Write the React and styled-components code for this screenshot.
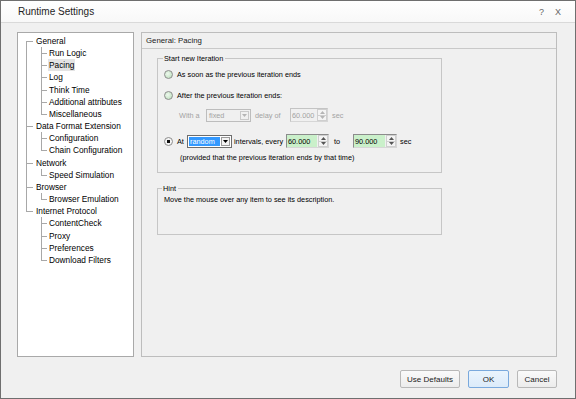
import React from "react";
import styled, { createGlobalStyle } from "styled-components";

const GlobalStyle = createGlobalStyle`
  html, body {
    margin: 0;
    padding: 0;
    background: #f0f0f0;
  }
  body {
    font-family: "Liberation Sans", Arial, sans-serif;
    color: #000;
  }
`;

const Window = styled.div`
  width: 576px;
  height: 399px;
  box-sizing: border-box;
  border: 1px solid #6f6f6f;
  background: #f0f0f0;
  display: flex;
  flex-direction: column;
`;

const TitleBar = styled.div`
  height: 22px;
  box-sizing: border-box;
  flex-shrink: 0;
  display: flex;
  align-items: center;
  padding: 0 14px 0 17px;
  background: linear-gradient(#ffffff, #f8f8f8);
  border-bottom: 1px solid #d9d9d9;
`;

const TitleText = styled.div`
  flex: 1;
  font-size: 10px;
  color: #1e1e1e;
`;

const TitleIcons = styled.div`
  display: flex;
  gap: 11px;
  font-size: 9px;
  color: #666;
`;

const Body = styled.div`
  flex: 1;
  display: flex;
  gap: 7px;
  padding: 9px 18px 0 16px;
  min-height: 0;
`;

const TreePanel = styled.div`
  width: 117px;
  flex-shrink: 0;
  box-sizing: border-box;
  background: #fff;
  border: 1px solid #a9a9a9;
  padding: 2px 0 0 8px;
  font-size: 8.3px;
`;

const Node = styled.div`
  position: relative;
  padding-left: ${p => (p.$child ? 7 : 9)}px;

  &::before {
    content: "";
    position: absolute;
    left: 0;
    top: 6px;
    width: ${p => (p.$child ? 6 : 7)}px;
    border-top: 1px solid #a8a8a8;
  }

  &::after {
    content: "";
    position: absolute;
    left: 0;
    top: ${p => (p.$first ? 6 : 0)}px;
    ${p => (p.$last ? "height: 7px;" : "bottom: 0;")}
    border-left: 1px solid #a8a8a8;
  }
`;

const NodeLabel = styled.div`
  height: 12.17px;
  line-height: 12.17px;
  white-space: nowrap;
`;

const LabelText = styled.span`
  padding: 1px 1px;
  background: ${p => (p.$selected ? "#e3e3e3" : "transparent")};
`;

const Children = styled.div`
  margin-left: 6px;
`;

const ContentPanel = styled.div`
  flex: 1;
  box-sizing: border-box;
  border: 1px solid #bdbdbd;
  display: flex;
  flex-direction: column;
`;

const PanelHeader = styled.div`
  height: 16px;
  box-sizing: border-box;
  border-bottom: 1px solid #c9c9c9;
  padding-left: 4px;
  display: flex;
  align-items: center;
  font-size: 7.8px;
  color: #1a1a1a;
`;

const PanelBody = styled.div`
  padding: 9px 0 0 15px;
  display: flex;
  flex-direction: column;
  gap: 15px;
`;

const GroupBox = styled.div`
  position: relative;
  width: 285px;
  box-sizing: border-box;
  border: 1px solid #c6c6c6;
  min-height: ${p => p.$h}px;
  padding: ${p => p.$pad};
  font-size: 7.3px;
`;

const Legend = styled.span`
  position: absolute;
  top: -5px;
  left: ${p => p.$left}px;
  padding: 0 2px 0 1px;
  background: #f0f0f0;
  line-height: 9px;
  font-size: 7.3px;
`;

const Row = styled.div`
  display: flex;
  align-items: center;
  height: 14px;
  margin-top: ${p => p.$mt || 0}px;
  padding-left: ${p => p.$indent || 0}px;
  white-space: nowrap;
`;

const Radio = styled.span`
  width: 9px;
  height: 9px;
  box-sizing: border-box;
  border-radius: 50%;
  border: 1px solid #8d8d8d;
  background: ${p =>
    p.$checked
      ? "radial-gradient(circle, #111 0 1.6px, #f4f4f4 2px)"
      : "radial-gradient(circle at 40% 40%, #eef8ee, #b6dcb6)"};
  margin-right: 4px;
  flex-shrink: 0;
`;

const Text = styled.span`
  width: ${p => (p.$w ? `${p.$w}px` : "auto")};
  margin-left: ${p => p.$ml || 0}px;
  color: ${p => (p.$disabled ? "#a3a3a3" : "#000")};
  flex-shrink: 0;
`;

const Select = styled.div`
  width: 45px;
  height: 13px;
  box-sizing: border-box;
  flex-shrink: 0;
  display: flex;
  padding: 1px;
  gap: 1px;
  border: 1px solid ${p => (p.$disabled ? "#bdbdbd" : "#6d6d6d")};
  background: ${p => (p.$disabled ? "#f0f0f0" : "#fff")};
`;

const SelectValue = styled.span`
  flex: 1;
  display: flex;
  align-items: center;
  padding-left: 1px;
  color: ${p => (p.$disabled ? "#a3a3a3" : "#fff")};
  background: ${p => (p.$disabled ? "transparent" : "#3399ff")};
`;

const SelectArrow = styled.span`
  width: 9px;
  box-sizing: border-box;
  border: 1px solid ${p => (p.$disabled ? "#c9c9c9" : "#9a9a9a")};
  background: ${p => (p.$disabled ? "#f0f0f0" : "#f3f3f3")};
  display: flex;
  align-items: center;
  justify-content: center;
`;

const Spinner = styled.div`
  width: ${p => p.$w}px;
  height: 14px;
  box-sizing: border-box;
  flex-shrink: 0;
  display: flex;
  border: 1px solid ${p => (p.$disabled ? "#c4c4c4" : "#8c8c8c")};
  border-right-color: #d6d6d6;
  border-bottom-color: #d6d6d6;
  background: #f0f0f0;
`;

const SpinValue = styled.span`
  flex: 1;
  display: flex;
  align-items: center;
  padding-left: 1px;
  color: ${p => (p.$disabled ? "#a3a3a3" : "#000")};
  background: ${p => (p.$disabled ? "#f0f0f0" : "#caf0ca")};
`;

const SpinButtons = styled.span`
  width: 10px;
  display: flex;
  flex-direction: column;
  margin-left: 1px;
`;

const SpinHalf = styled.span`
  flex: 1;
  display: flex;
  align-items: center;
  justify-content: center;
  border: 1px solid #cfcfcf;
  border-top: ${p => (p.$down ? "none" : "1px solid #cfcfcf")};
  background: #f4f4f4;
`;

const HintText = styled.div`
  font-size: 7.3px;
  line-height: 10px;
`;

const Footer = styled.div`
  flex-shrink: 0;
  display: flex;
  justify-content: flex-end;
  gap: 8px;
  padding: 13px 18px 10px 0;
`;

const Button = styled.button`
  width: ${p => p.$w}px;
  height: 18px;
  box-sizing: border-box;
  padding: 0;
  font-family: "Liberation Sans", Arial, sans-serif;
  font-size: 8px;
  color: #1a1a1a;
  border-radius: 2px;
  border: 1px solid ${p => (p.$primary ? "#7aa9dd" : "#b8b8b8")};
  background: ${p =>
    p.$primary
      ? "linear-gradient(#eaf4fd, #dcebfa)"
      : "linear-gradient(#fafafa, #ececec)"};
`;

function Tri({ up, color = "#000" }) {
  return (
    <svg width="5" height="3" viewBox="0 0 5 3">
      <path d={up ? "M0 3 L2.5 0 L5 3 Z" : "M0 0 L5 0 L2.5 3 Z"} fill={color} />
    </svg>
  );
}

function DropDown({ value, disabled }) {
  return (
    <Select $disabled={disabled}>
      <SelectValue $disabled={disabled}>{value}</SelectValue>
      <SelectArrow $disabled={disabled}>
        <Tri color={disabled ? "#b5b5b5" : "#000"} />
      </SelectArrow>
    </Select>
  );
}

function SpinBox({ value, width, disabled }) {
  const c = disabled ? "#b5b5b5" : "#555";
  return (
    <Spinner $w={width} $disabled={disabled}>
      <SpinValue $disabled={disabled}>{value}</SpinValue>
      <SpinButtons>
        <SpinHalf>
          <Tri up color={c} />
        </SpinHalf>
        <SpinHalf $down>
          <Tri color={c} />
        </SpinHalf>
      </SpinButtons>
    </Spinner>
  );
}

const tree = [
  { label: "General", children: ["Run Logic", "Pacing", "Log", "Think Time", "Additional attributes", "Miscellaneous"] },
  { label: "Data Format Extension", children: ["Configuration", "Chain Configuration"] },
  { label: "Network", children: ["Speed Simulation"] },
  { label: "Browser", children: ["Browser Emulation"] },
  { label: "Internet Protocol", children: ["ContentCheck", "Proxy", "Preferences", "Download Filters"] },
];

function App() {
  return (
    <>
      <GlobalStyle />
      <Window>
        <TitleBar>
          <TitleText>Runtime Settings</TitleText>
          <TitleIcons>
            <span>?</span>
            <span>X</span>
          </TitleIcons>
        </TitleBar>

        <Body>
          <TreePanel>
            {tree.map((group, gi) => (
              <Node key={group.label} $first={gi === 0} $last={gi === tree.length - 1}>
                <NodeLabel>
                  <LabelText>{group.label}</LabelText>
                </NodeLabel>
                <Children>
                  {group.children.map((child, ci) => (
                    <Node key={child} $child $last={ci === group.children.length - 1}>
                      <NodeLabel>
                        <LabelText $selected={child === "Pacing"}>{child}</LabelText>
                      </NodeLabel>
                    </Node>
                  ))}
                </Children>
              </Node>
            ))}
          </TreePanel>

          <ContentPanel>
            <PanelHeader>General: Pacing</PanelHeader>
            <PanelBody>
              <GroupBox $h={115} $pad="8px 0 0 6px">
                <Legend $left={5}>Start new Iteration</Legend>
                <Row>
                  <Radio />
                  <Text>As soon as the previous iteration ends</Text>
                </Row>
                <Row $mt={7}>
                  <Radio />
                  <Text>After the previous iteration ends:</Text>
                </Row>
                <Row $mt={6} $indent={15}>
                  <Text $w={27} $disabled>With a</Text>
                  <DropDown value="fixed" disabled />
                  <Text $w={35} $ml={4} $disabled>delay of</Text>
                  <SpinBox value="60.000" width={38} disabled />
                  <Text $ml={4} $disabled>sec</Text>
                </Row>
                <Row $mt={12}>
                  <Radio $checked />
                  <Text $w={10}>At</Text>
                  <DropDown value="random" />
                  <Text $w={52} $ml={2}>intervals, every</Text>
                  <SpinBox value="60.000" width={43} />
                  <Text $w={19} $ml={5}>to</Text>
                  <SpinBox value="90.000" width={44} />
                  <Text $ml={3}>sec</Text>
                </Row>
                <Row $mt={2} $indent={16}>
                  <Text>(provided that the previous iteration ends by that time)</Text>
                </Row>
              </GroupBox>

              <GroupBox $h={47} $pad="6px 0 0 6px">
                <Legend $left={4}>Hint</Legend>
                <HintText>Move the mouse over any item to see its description.</HintText>
              </GroupBox>
            </PanelBody>
          </ContentPanel>
        </Body>

        <Footer>
          <Button $w={60}>Use Defaults</Button>
          <Button $w={41} $primary>OK</Button>
          <Button $w={40}>Cancel</Button>
        </Footer>
      </Window>
    </>
  );
}

export default App;
